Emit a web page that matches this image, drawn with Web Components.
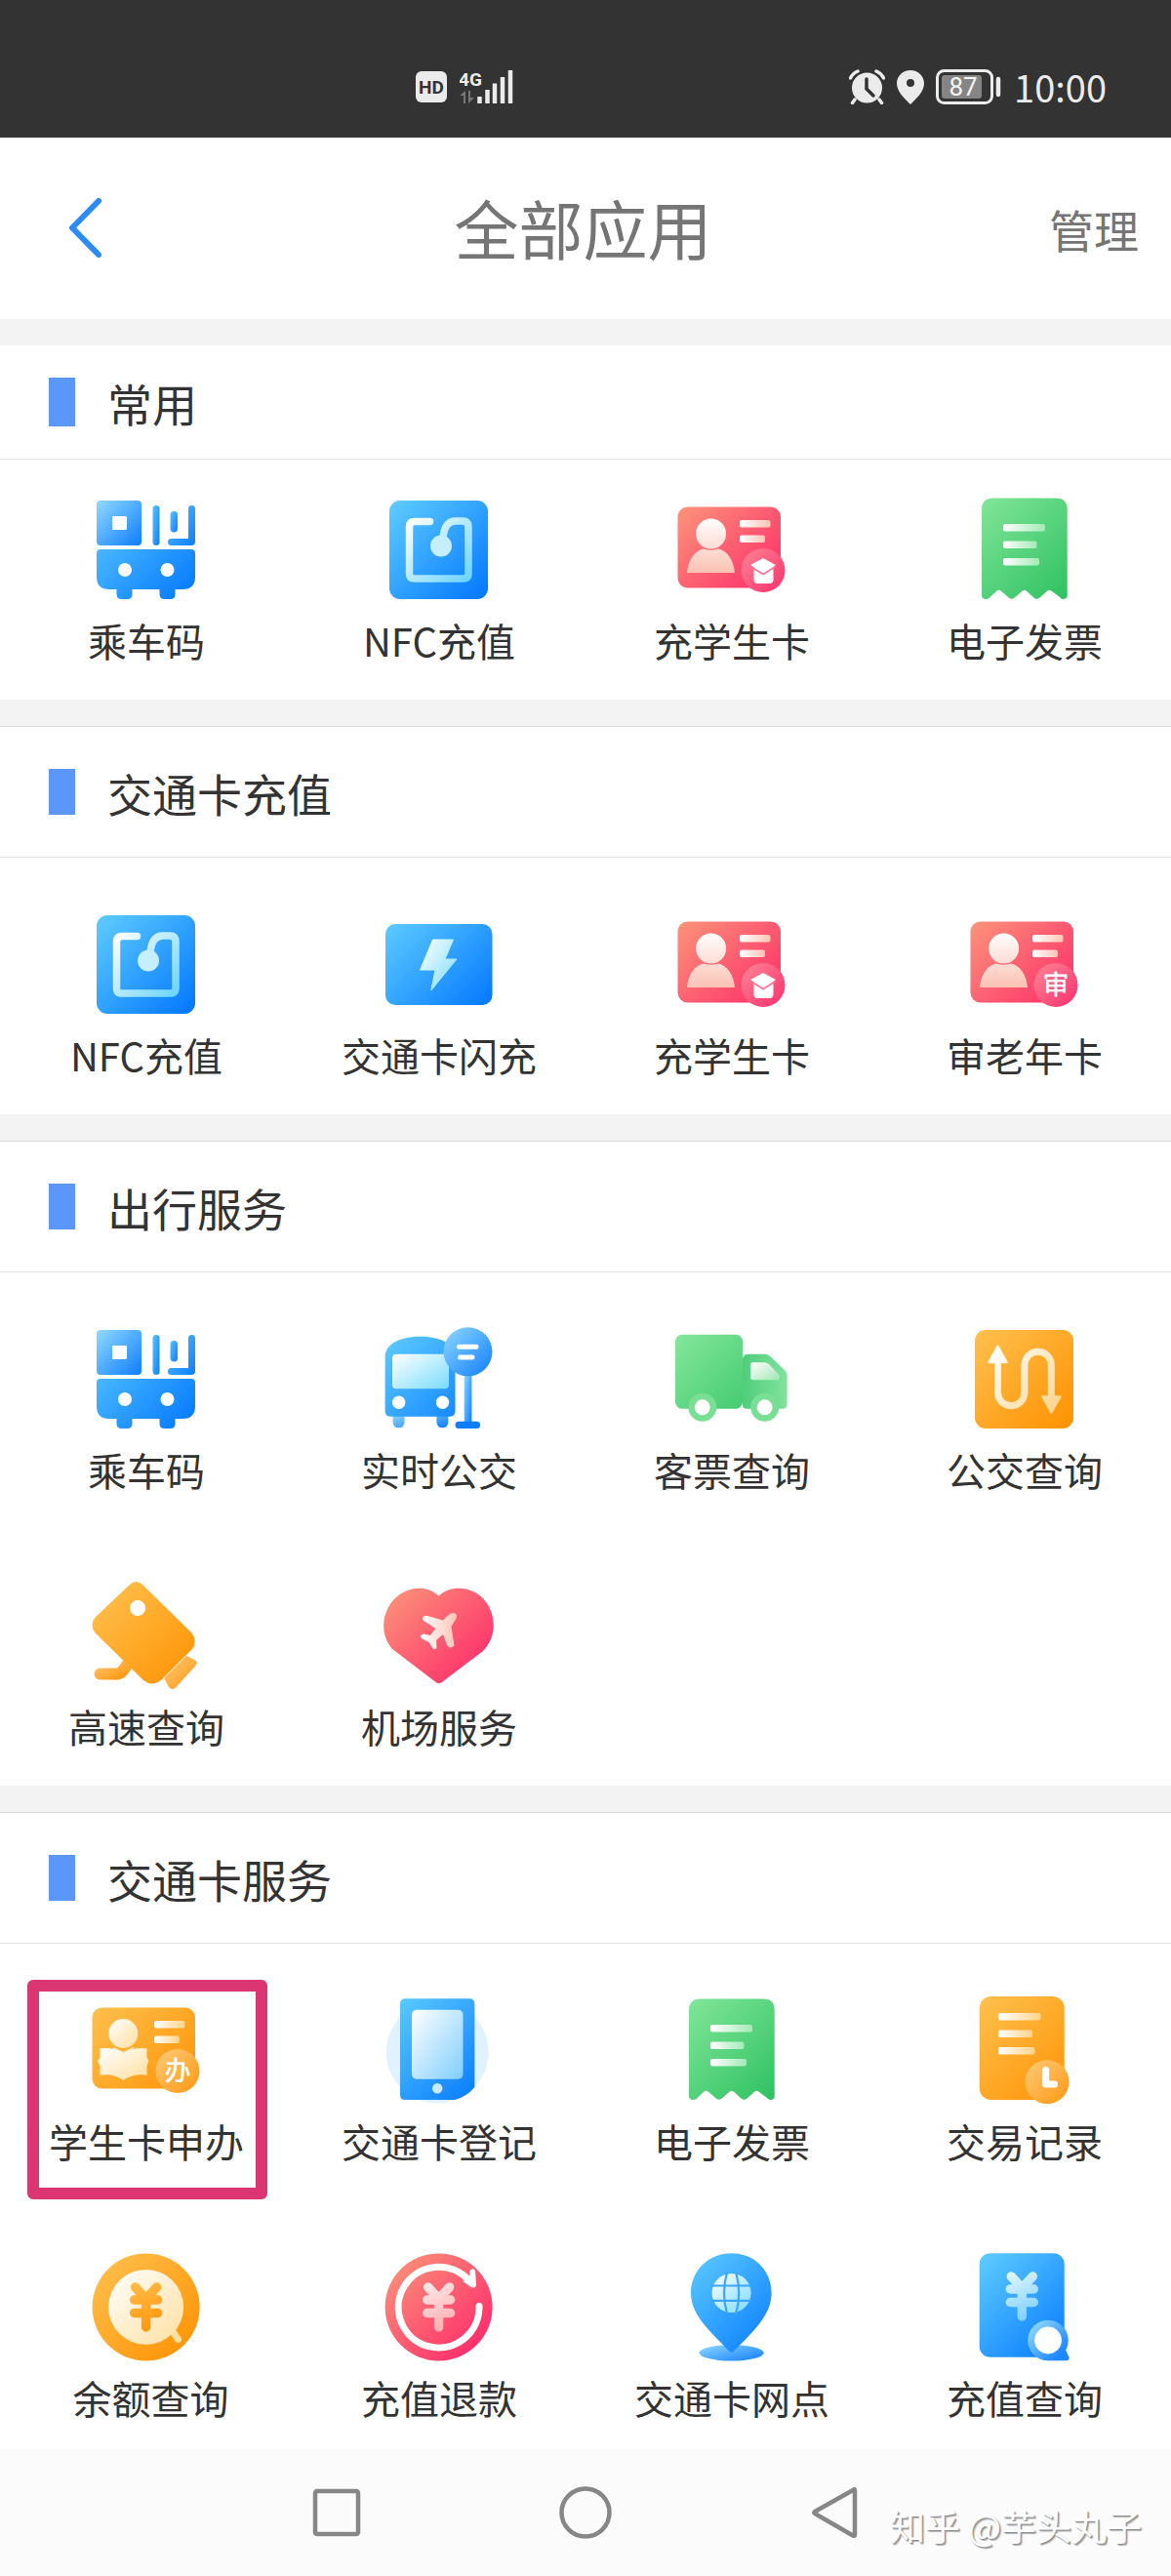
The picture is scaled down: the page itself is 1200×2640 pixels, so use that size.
<!DOCTYPE html>
<html lang="zh-CN">
<head>
<meta charset="utf-8">
<meta name="viewport" content="width=device-width, initial-scale=1">
<title>全部应用</title>
<style>
  body { margin: 0; background: #fff; color: #333; font-family: "Noto Sans CJK SC", "Noto Sans", sans-serif; }
</style>
</head>
<body>
<app-shell>
  <status-bar slot="status"></status-bar>
  <app-header slot="header" heading="全部应用" action="管理"></app-header>
  <app-section heading="常用" compact>
    <app-tile icon="ride">乘车码</app-tile>
    <app-tile icon="nfc">NFC充值</app-tile>
    <app-tile icon="student">充学生卡</app-tile>
    <app-tile icon="invoice">电子发票</app-tile>
  </app-section>
  <app-section heading="交通卡充值">
    <app-tile icon="nfc">NFC充值</app-tile>
    <app-tile icon="flash">交通卡闪充</app-tile>
    <app-tile icon="student">充学生卡</app-tile>
    <app-tile icon="senior">审老年卡</app-tile>
  </app-section>
  <app-section heading="出行服务">
    <app-tile icon="ride">乘车码</app-tile>
    <app-tile icon="bus">实时公交</app-tile>
    <app-tile icon="truck">客票查询</app-tile>
    <app-tile icon="route">公交查询</app-tile>
    <app-tile icon="tag">高速查询</app-tile>
    <app-tile icon="airport">机场服务</app-tile>
  </app-section>
  <app-section heading="交通卡服务" last>
    <app-tile icon="apply" marked>学生卡申办</app-tile>
    <app-tile icon="phone">交通卡登记</app-tile>
    <app-tile icon="invoice">电子发票</app-tile>
    <app-tile icon="records">交易记录</app-tile>
    <app-tile icon="balance">&nbsp;余额查询</app-tile>
    <app-tile icon="refund">充值退款</app-tile>
    <app-tile icon="outlet">交通卡网点</app-tile>
    <app-tile icon="query">充值查询</app-tile>
  </app-section>
  <nav-bar slot="nav">知乎 @芋头丸子</nav-bar>
</app-shell>

<script>
const define = (name, render) => customElements.define(name, class extends HTMLElement {
  connectedCallback() {
    if (this.shadowRoot) return;
    this.attachShadow({ mode: 'open' }).innerHTML = render(this);
  }
});

/* Two-stop gradients shared by all the tile icons, on a 120-unit canvas. */
const gradient = (id, from, to, box = '8 8 112 112') => {
  const [x1, y1, x2, y2] = box.split(' ');
  return `<linearGradient id="${id}" gradientUnits="userSpaceOnUse" x1="${x1}" y1="${y1}" x2="${x2}" y2="${y2}"><stop stop-color="${from}"/><stop offset="1" stop-color="${to}"/></linearGradient>`;
};
const local = (id, from, to, dir = '0 0 1 1') => {
  const [x1, y1, x2, y2] = dir.split(' ');
  return `<linearGradient id="${id}" x1="${x1}" y1="${y1}" x2="${x2}" y2="${y2}"><stop stop-color="${from}"/><stop offset="1" stop-color="${to}"/></linearGradient>`;
};
/* The yuan sign is drawn round its own centre, so its gradients are too. */
const defs = `<defs>
  ${gradient('blue', '#60ceff', '#0074ff')}${gradient('red', '#fb967a', '#ff2169')}
  ${gradient('green', '#84e79b', '#2abf5f')}${gradient('orange', '#ffc14f', '#ff9000')}
  ${local('blueL', '#90daff', '#0f7dff')}${local('blueS', '#55c5ff', '#0f7dff')}
  ${local('redL', '#ff8593', '#fb2f6e')}${local('orangeL', '#ffcb7a', '#ff9810')}
  ${local('greenL', '#4fcd7b', '#82e29d', '0 0 1 0')}
  ${local('whiteR', '#ffffff', '#ffc3b6', '0 0 1 0')}${gradient('bust', '#ffffff', '#fbbfb0', '38 26 38 86')}
  ${local('whiteG', '#ffffff', '#a3eab6', '0 0 1 0')}${local('whiteO', '#ffffff', '#ffd489', '0 0 1 0')}
  ${local('cream', '#ffffff', '#ffdf9f')}${local('glass', '#ffffff', '#78dcff')}
  ${local('screen', '#ffffff', '#7fceff')}${local('mint', '#ffffff', '#9fe6b3')}
  ${gradient('line', '#ffffff', '#68d4ff', '28 28 92 92')}${gradient('lineO', '#ffffff', '#ffd48a', '28 28 96 90')}
  ${gradient('yuanO', '#ffbb49', '#ff9509', '-12 -24 12 24')}${gradient('yuanR', '#ffe7e6', '#ffabae', '-12 -24 12 24')}
  ${gradient('yuanB', '#e0f6ff', '#79cdff', '-12 -24 12 24')}
</defs>`;

const card = (fill, ink) => `<rect x="4.5" y="15.5" width="105.5" height="83" rx="10" fill="url(#${fill})"/>
  <rect x="68" y="29" width="31.5" height="7.5" rx="2" fill="url(#${ink})"/><rect x="68" y="44.5" width="26" height="7.5" rx="2" fill="url(#${ink})"/>`;
const person = `<circle cx="38.6" cy="43" r="15.5" fill="url(#bust)"/>
  <path d="M14 83C15 70 22 60 31 58.5Q38.6 61 46 58.5C55 60 62 70 63 83Z" fill="url(#bust)"/>`;
const badge = fill => `<circle cx="92" cy="80.5" r="22.5" fill="url(#${fill})"/>`;
const badgeText = t => `<text x="92" y="90" text-anchor="middle" font-size="27" font-weight="500" fill="#fff">${t}</text>`;
const yuan = (x, y, paint) => `<path transform="translate(${x} ${y})" d="M-11 -20 0 -8 11 -20M-12 -7H12M-12 6.500H12M0 -8V21" fill="none" stroke="url(#${paint})" stroke-width="9.500" stroke-linecap="round" stroke-linejoin="round"/>`;

const icons = {
  ride: `<path fill-rule="evenodd" d="M13 9H51Q55 9 55 13V51Q55 55 51 55H13Q9 55 9 51V13Q9 9 13 9ZM26 25Q25 25 25 26V38Q25 39 26 39H39Q40 39 40 38V26Q40 25 39 25Z" fill="url(#blueL)"/>
    <rect x="66.500" y="14" width="7" height="41" rx="3.500" fill="url(#blueS)"/><rect x="84.500" y="20" width="7.500" height="21.500" rx="3.700" fill="url(#blueS)"/>
    <path d="M103 17.500Q103 14 106.500 14T110 17.500V51Q110 55 106 55H85.500Q82 55 82 51.500T85.500 48H103Z" fill="url(#blueS)"/>
    <path fill-rule="evenodd" d="M13 59H106Q110 59 110 63V87Q110 100 97 100H89.500V105Q89.500 110 84.500 110H78.500Q73.500 110 73.500 105V100H45.500V105Q45.500 110 40.500 110H34.500Q29.500 110 29.500 105V100H22Q9 100 9 87V63Q9 59 13 59ZM45 80A7 7 0 1 0 31 80A7 7 0 1 0 45 80ZM88.500 80A7 7 0 1 0 74.500 80A7 7 0 1 0 88.500 80Z" fill="url(#blue)"/>`,
  nfc: `<rect x="9" y="9" width="101" height="101" rx="11" fill="url(#blue)"/>
    <path d="M50.500 30.500H35Q29.500 30.500 29.500 36V84Q29.500 89 35 89H84Q90 89 90 84V36Q90 30 84 30H76Q65 31 64 48" fill="none" stroke="url(#line)" stroke-width="7.500" stroke-linecap="round"/>
    <circle cx="62" cy="55.500" r="11" fill="#c5efff"/>`,
  student: card('red', 'whiteR') + person + badge('redL') + `<path d="M82.500 76H102.500V90Q102.500 94 98.500 94H86.500Q82.500 94 82.500 90Z" fill="#fff"/>
    <path d="M79 76.500 92 84.500 105 76.500" fill="none" stroke="#ff6f93" stroke-width="1.500"/><path d="M92 68 105 75 92 83 79 75Z" fill="#fff"/>`,
  senior: card('red', 'whiteR') + person + badge('redL') + badgeText('审'),
  invoice: `<path d="M28 6.500H92Q103.700 6.500 103.700 18V106Q103.700 110 99.500 110Q97.500 110 96 108L88 102Q85.300 99.500 82.800 102L75.500 108.500Q72.300 111 69.500 108.500L62.200 102Q59.700 99.500 57.200 102L49.700 108.500Q46.700 111 43.700 108.500L36.200 102Q33.600 99.500 31 102L24 108.500Q22.500 110 20 110Q16 110 16 106V18Q16 6.500 28 6.500Z" fill="url(#green)"/>
    <rect x="38" y="33" width="43" height="7.500" rx="2" fill="url(#whiteG)"/><rect x="38" y="50.500" width="34.500" height="7.500" rx="2" fill="url(#whiteG)"/><rect x="38" y="68" width="37" height="7.500" rx="2" fill="url(#whiteG)"/>`,
  flash: `<rect x="5" y="18" width="109.500" height="83" rx="10" fill="url(#blue)"/><path d="M53.500 34H74.500L66 54H78L51.800 86 56 65H40.500Z" fill="url(#glass)" stroke="url(#glass)" stroke-linejoin="round"/>`,
  bus: `<path d="M12.600 94H24.500V104A6 6 0 0 1 12.600 104ZM57.400 94H69.300V104A6 6 0 0 1 57.400 104Z" fill="url(#blueL)"/>
    <path d="M4.600 36C5 22 22 15.700 40.500 15.700S76.500 22 76.500 36V92Q76.500 97.700 71 97.700H10Q4.600 97.700 4.600 92Z" fill="url(#blue)"/>
    <rect x="12" y="33.700" width="58" height="35.600" rx="4" fill="url(#glass)"/><circle cx="18.700" cy="83.300" r="6.700" fill="#fff"/><circle cx="63.500" cy="83.300" r="6.700" fill="#fff"/>
    <rect x="85.700" y="50" width="7.700" height="56" fill="url(#blueL)"/><rect x="76.500" y="102.700" width="25.500" height="7.300" rx="3.500" fill="#0f7dff"/>
    <circle cx="89.500" cy="31.300" r="25" fill="url(#blueL)"/><path d="M80.500 26.200H98M81.500 37H94" stroke="#fff" stroke-width="5" stroke-linecap="round"/>`,
  truck: `<path d="M71 38Q72 33.700 77 33.700H93Q97 33.700 99.500 36L114 50Q116.600 52.500 116.600 56V85Q116.600 89.700 112 89.700H75Q71 89.700 71 86Z" fill="url(#greenL)"/>
    <rect x="2" y="13.700" width="69" height="76" rx="7" fill="url(#green)"/>
    <path d="M82 42.300H93Q96 42.300 98 44L107.500 54Q110 57 108 60.300H82Q79 60.300 79 57.500V45Q79 42.300 82 42.300Z" fill="url(#mint)"/>
    <circle cx="29.800" cy="88.300" r="14.500" fill="#78df95"/><circle cx="29.800" cy="88.300" r="8" fill="#fff"/><circle cx="93.700" cy="88.300" r="14.500" fill="#78df95"/><circle cx="93.700" cy="88.300" r="8" fill="#fff"/>`,
  route: `<rect x="9" y="9" width="101" height="101" rx="11" fill="url(#orange)"/>
    <path d="M32.500 40V73A13.700 13.700 0 0 0 59.900 73V45A13.700 13.700 0 0 1 87.300 45V78" fill="none" stroke="url(#lineO)" stroke-width="7"/>
    <path d="M32.500 26 41.500 42H23.500ZM78.500 77.500H96.500L87.300 93.500Z" fill="url(#lineO)" stroke="url(#lineO)" stroke-width="2.500" stroke-linejoin="round"/>`,
  tag: `<path d="M12.500 98.500H30Q34 98 36 95L44 84" fill="none" stroke="url(#orangeL)" stroke-width="12" stroke-linecap="round"/>
    <path d="M101 80 109.500 84Q113 86.500 110.500 90L90 112.500Q86 116 83 112L78 103Z" fill="url(#orangeL)"/>
    <path fill-rule="evenodd" d="M43 7Q49.500 1 56 7L106 56Q113 64 107 73L75 105Q65.500 112 57 105L8 57Q1 48 8 40ZM59 31A8 8 0 1 0 43 31A8 8 0 1 0 59 31Z" fill="url(#orange)"/>`,
  airport: `<path d="M59.700 18.700C50 9 35 8.500 23 15C3 26 -4 54 12 73L56 106.500Q59.700 110 63.500 106.500L105 75C123 57 117 26 97 15C85 8.500 69 9 59.700 18.700Z" fill="url(#red)"/>
    <path d="M76.500 36.500Q73 34.500 68.500 39L64 43.500 48 39Q41 38.500 43.500 43.500L56.500 52 51 59 44 57.500Q38.500 59 42.500 62.500L49.500 66 53.500 72.500Q57 74.500 57.500 71L57 64 64 58 68 69Q71.500 74 75.500 69.500L72.500 50 76 44Q80 39 76.500 36.500Z" fill="url(#whiteR)"/>`,
  apply: card('orange', 'whiteO') + `<circle cx="36.300" cy="42" r="15" fill="url(#cream)"/><path d="M26 57 36.300 62 47 57" fill="none" stroke="#ffe7bd" stroke-width="2"/>
    <path d="M12.500 57.300Q27 56 36.300 62.500Q46 56 60.500 57.300V67L62.500 70 60.500 75V84.700Q46 83 36.300 90Q27 83 12.500 84.700V75L10 70 12.500 67Z" fill="url(#cream)"/>` + badge('orangeL') + badgeText('办'),
  phone: `<circle cx="58.200" cy="61" r="52.500" fill="#e1f2ff"/><path d="M25 6.300H91Q96.400 6.300 96.400 12V97Q88 107 76 110H25Q20 110 20 105V12Q20 6.300 25 6.300Z" fill="url(#blue)"/>
    <rect x="32" y="17.700" width="52.500" height="71" rx="5" fill="url(#screen)"/><circle cx="58.200" cy="98.300" r="5.200" fill="#cbeaff"/>`,
  records: `<rect x="13.700" y="4" width="87" height="106" rx="12" fill="url(#orange)"/>
    <rect x="33" y="21" width="43.500" height="7.500" rx="2" fill="url(#whiteO)"/><rect x="33" y="38.500" width="35" height="7.500" rx="2" fill="url(#whiteO)"/><rect x="33" y="56" width="37.500" height="7.500" rx="2" fill="url(#whiteO)"/>
    <circle cx="83" cy="91.700" r="22.500" fill="url(#orangeL)"/><path d="M81.700 79.500V94H90.500" fill="none" stroke="#fff" stroke-width="7" stroke-linecap="round" stroke-linejoin="round"/>`,
  balance: `<circle cx="59.600" cy="59.400" r="55" fill="url(#orange)"/><path d="M86 83 92.500 92.500" stroke="#ffdf9f" stroke-width="7" stroke-linecap="round"/><circle cx="59.600" cy="59.400" r="38.500" fill="url(#cream)"/>` + yuan(59.6, 59, 'yuanO'),
  refund: `<circle cx="59.600" cy="59.400" r="55" fill="url(#red)"/><path d="M101 58.500A41.400 41.400 0 1 1 90 31.500" fill="none" stroke="#fff" stroke-width="7" stroke-linecap="round"/>
    <path d="M91.500 22Q94.500 18.500 97 22L98 37Q97 41 93 39L84 33 91 31Z" fill="#fff"/>` + yuan(59.6, 59, 'yuanR'),
  outlet: `<ellipse cx="59.600" cy="106.300" rx="33" ry="8.200" fill="url(#blueL)"/><path d="M59.600 4.300C83 4.300 100.600 22 100.600 45C100.600 69 79 87 62 104.500Q59.600 107 57.200 104.500C41 87 18 69 18 45C18 22 36 4.300 59.600 4.300Z" fill="url(#blue)"/>
    <circle cx="59.600" cy="45" r="20" fill="url(#glass)"/><path d="M39 37.500H80M39 52.800H80M55 24C51 38 51 52 55 66M64.200 24C68.200 38 68.200 52 64.200 66" fill="none" stroke="#3ba5ff" stroke-width="2.200"/>`,
  query: `<rect x="13.700" y="4.300" width="87" height="106.500" rx="11" fill="url(#blue)"/>` + yuan(57.3, 48, 'yuanB') +
    `<path d="M95 106 101 101 105.600 111Q106 114.300 102 114.300H84Z" fill="#1d87ff"/><circle cx="84" cy="93.500" r="17.300" fill="#fff" stroke="url(#blueL)" stroke-width="6.800"/>`
};

define('app-icon', el => `<style>
  :host { display: block; width: 120px; height: 120px; }
  svg { display: block; width: 100%; height: 100%; overflow: visible; }
</style><svg viewBox="0 0 120 120" aria-hidden="true">${defs}${icons[el.getAttribute('name')]}</svg>`);

define('app-tile', el => `<style>
  :host { display: block; position: relative; }
  a { display: flex; flex-direction: column; align-items: center; gap: 8px; padding-bottom: 2px; color: inherit; text-decoration: none; font-size: 40px; line-height: 48px; white-space: nowrap; }
  :host([marked])::after { content: ""; position: absolute; inset: -13px 26px -34px 28px; border: 12px solid #db3672; border-radius: 6px; pointer-events: none; box-sizing: border-box; }
</style><a href="#"><app-icon name="${el.getAttribute('icon')}"></app-icon><span><slot></slot></span></a>`);

define('app-section', el => `<style>
  :host { display: block; --row: 133px; --bar: 47px; --start: 50px; --end: 35px; border-top: 1px solid #dcdcdc; }
  :host([compact]) { --row: 116px; --bar: 50px; --start: 33px; border-top: 0; }
  :host([last]) { --end: 27px; }
  h2 { display: flex; align-items: center; gap: 33px; height: var(--row); margin: 0; padding-left: 50px; border-bottom: 1px solid #e4e4e4; font-size: 46px; font-weight: 400; line-height: 60px; }
  h2::before { content: ""; width: 27px; height: var(--bar); background: #5b97f8; }
  .grid { display: grid; grid-template-columns: repeat(4, 1fr); row-gap: 85px; padding: var(--start) 0 var(--end); }
</style><h2>${el.getAttribute('heading')}</h2><div class="grid"><slot></slot></div>`);

define('app-shell', () => `<style>
  :host { display: flex; flex-direction: column; min-height: 100vh; }
  main { display: flex; flex-direction: column; gap: 27px; padding-top: 27px; background: #f3f3f3; }
  ::slotted(app-section) { background-color: #fff; }
  ::slotted(nav-bar) { flex: 1; }
</style><slot name="status"></slot><slot name="header"></slot><main><slot></slot></main><slot name="nav"></slot>`);

define('app-header', el => `<style>
  :host { display: grid; grid-template-columns: 1fr auto 1fr; align-items: center; height: 186px; padding: 0 33px 0 62px; background: #fff; color: #757575; box-sizing: border-box; }
  h1 { margin: 0 34px 4px 0; font-size: 66px; font-weight: 400; line-height: 84px; }
  button { border: 0; padding: 0; background: none; font: inherit; color: inherit; font-size: 46px; line-height: 60px; justify-self: end; }
  .back { justify-self: start; }
  svg { display: block; }
</style><button class="back" aria-label="返回"><svg width="48" height="68" viewBox="0 0 48 68"><path d="M39 6 12 33.500 39 61" fill="none" stroke="#2b8cf5" stroke-width="6" stroke-linecap="round" stroke-linejoin="round"/></svg></button>
<h1>${el.getAttribute('heading')}</h1><button>${el.getAttribute('action')}</button>`);

define('status-bar', () => `<style>
  :host { display: flex; justify-content: space-between; align-items: center; height: 141px; padding: 37px 66px 0 425px; background: #333; color: #ebebeb; box-sizing: border-box; }
  div { display: flex; align-items: center; gap: 12px; }
  svg { display: block; }
  time { font-size: 38px; line-height: 48px; }
</style>
<div><svg width="34" height="36" viewBox="0 0 34 36"><rect x="1" y="2" width="32" height="32" rx="6" fill="#ebebeb"/><text x="17" y="25" text-anchor="middle" font-family="Roboto" font-size="19" font-weight="700" fill="#333">HD</text></svg>
<svg width="56" height="36" viewBox="0 0 56 36"><text x="-1" y="17" font-family="Roboto" font-size="19" font-weight="700" fill="#ebebeb">4G</text>
<path d="M4 35V27H0L6 22V35ZM9 22V35L15 29H11V22Z" fill="#777"/><path d="M20.500 35V28M28.500 35V21M36 35V14.500M44 35V8M52 35V1" stroke="#ebebeb" stroke-width="4.500"/></svg></div>
<div><svg width="37" height="36" viewBox="0 0 37 36"><circle cx="18.500" cy="19" r="15.500" fill="#ebebeb"/><path d="M6 31 3.500 34.500M31 31 33.500 34.500M1.500 9Q4 4 9 2M35.500 9Q33 4 28 2" fill="none" stroke="#ebebeb" stroke-width="3.500" stroke-linecap="round"/><path d="M18 10V20L25 27" fill="none" stroke="#333" stroke-width="3.500" stroke-linecap="round"/></svg>
<svg width="28" height="36" viewBox="0 0 28 36"><path fill-rule="evenodd" d="M14 1C22 1 28 7 28 14.500C28 23 20 30 14 36C8 30 0 23 0 14.500C0 7 6 1 14 1ZM18 14A4 4 0 1 0 10 14A4 4 0 1 0 18 14Z" fill="#ebebeb"/></svg>
<svg width="68" height="36" viewBox="0 0 68 36"><rect x="1.500" y="1.500" width="56" height="33" rx="7" fill="none" stroke="#ebebeb" stroke-width="3"/><rect x="6" y="6" width="41" height="24" rx="3" fill="#858585"/><path d="M64 10V26" stroke="#ebebeb" stroke-width="4.500" stroke-linecap="round"/><text x="28" y="27" text-anchor="middle" font-family="Roboto" font-size="26" fill="#f4f4f4">87</text></svg>
<time>10:00</time></div>`);

define('nav-bar', () => `<style>
  :host { display: flex; justify-content: center; align-items: center; position: relative; min-height: 130px; background: #fbfbfb; }
  button { display: flex; justify-content: center; width: 255px; border: 0; padding: 0; background: none; }
  svg { fill: none; stroke: #878787; stroke-width: 4.5; stroke-linejoin: round; }
  .mark { position: absolute; right: 30px; bottom: 28px; font-size: 36px; line-height: 48px; color: #fdfdfd; text-shadow: 1px 1px 1px #8c8c8c, 2px 2px 1px #b4b4b4; white-space: nowrap; }
</style>
<button aria-label="最近任务"><svg width="56" height="56"><rect x="6" y="6" width="44" height="44" rx="2"/></svg></button>
<button aria-label="主页"><svg width="56" height="56"><circle cx="28" cy="28" r="24.500"/></svg></button>
<button aria-label="返回"><svg width="56" height="56"><path d="M48 4.500Q49 3.500 49 5.500V50.500Q49 52.500 47 51.500L8 29Q6.500 28 8 27Z"/></svg></button>
<span class="mark"><slot></slot></span>`);
</script>
</body>
</html>
